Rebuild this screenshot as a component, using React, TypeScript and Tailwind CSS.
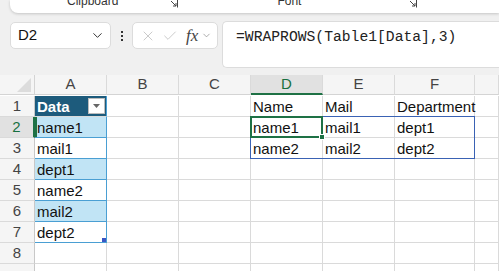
import { ChevronDown, X, Check } from 'lucide-react';

const cols = ['A', 'B', 'C', 'D', 'E', 'F', ''];

type Cell = { text?: string; cls?: string };

// rows 1..9, columns A..G
const rows: Cell[][] = [
  [
    { text: 'Data', cls: 'bg-[#1d5b7c] text-white font-bold border-r-[#4a9fd3]' },
    {},
    {},
    { text: 'Name' },
    { text: 'Mail' },
    { text: 'Department' },
    {},
  ],
  [
    { text: 'name1', cls: 'bg-[#c1e4f5] border-r-[#4a9fd3] border-b-[#4a9fd3]' },
    {},
    {},
    { text: 'name1' },
    { text: 'mail1' },
    { text: 'dept1' },
    {},
  ],
  [
    { text: 'mail1', cls: 'border-r-[#4a9fd3] border-b-[#4a9fd3]' },
    {},
    {},
    { text: 'name2' },
    { text: 'mail2' },
    { text: 'dept2' },
    {},
  ],
  [{ text: 'dept1', cls: 'bg-[#c1e4f5] border-r-[#4a9fd3] border-b-[#4a9fd3]' }, {}, {}, {}, {}, {}, {}],
  [{ text: 'name2', cls: 'border-r-[#4a9fd3] border-b-[#4a9fd3]' }, {}, {}, {}, {}, {}, {}],
  [{ text: 'mail2', cls: 'bg-[#c1e4f5] border-r-[#4a9fd3] border-b-[#4a9fd3]' }, {}, {}, {}, {}, {}, {}],
  [{ text: 'dept2', cls: 'border-r-[#4a9fd3] border-b-[#4a9fd3]' }, {}, {}, {}, {}, {}, {}],
  [{}, {}, {}, {}, {}, {}, {}],
  [{}, {}, {}, {}, {}, {}, {}],
];

function Launcher() {
  return (
    <svg width="9" height="9" viewBox="0 0 9 9" fill="none" stroke="#444" strokeWidth="1">
      <path d="M0.5 0.5h8v8" />
      <path d="M2 2l5 5M4 7h3V4" />
    </svg>
  );
}

export default function App() {
  return (
    <div className="w-[499px] h-[271px] overflow-hidden bg-[#f0f0f0] font-['Liberation_Sans',Arial,sans-serif] text-[#111]">
      {/* ribbon bottom */}
      <div className="ml-[10px] h-[13px] bg-white rounded-bl-[8px] shadow-[0_1px_3px_rgba(0,0,0,0.18)] flex items-end overflow-hidden text-[12px] text-[#333] leading-none">
        <span className="ml-[57px] mb-[6px]">Clipboard</span>
        <span className="ml-[51px] mb-[5px]"><Launcher /></span>
        <span className="ml-[99px] mb-[6px]">Font</span>
        <span className="ml-[107px] mb-[5px]"><Launcher /></span>
      </div>

      {/* formula row */}
      <div className="flex items-start mt-[8px] pl-[10px] h-[47px]">
        <div className="w-[101px] h-[27px] mt-[1px] bg-white border border-[#dcdcdc] rounded-[5px] flex items-center pl-[7px] pr-[5px]">
          <span className="text-[15px] flex-1">D2</span>
          <ChevronDown size={15} strokeWidth={1.6} className="text-[#333]" />
        </div>
        <div className="w-[21px] h-[27px] mt-[1px] flex flex-col items-center justify-center gap-[2px]">
          <span className="w-[2px] h-[2px] bg-[#333]" />
          <span className="w-[2px] h-[2px] bg-[#333]" />
          <span className="w-[2px] h-[2px] bg-[#333]" />
        </div>
        <div className="w-[86px] h-[27px] mt-[1px] bg-white border border-[#dcdcdc] rounded-[5px] flex items-center pl-[7px]">
          <X size={16} strokeWidth={1.2} className="text-[#bdbdbd]" />
          <Check size={16} strokeWidth={1.2} className="text-[#bdbdbd] ml-[6px]" />
          <span className="ml-[8px] font-['Liberation_Serif',serif] italic text-[17px] text-[#444] leading-none">fx</span>
          <ChevronDown size={11} strokeWidth={1.5} className="text-[#888] ml-[3px]" />
        </div>
        <div className="flex-1 ml-[4px] h-[47px] bg-white border border-[#dcdcdc] border-r-0 rounded-l-[5px] pl-[13px] pt-[4px] font-['Liberation_Mono',monospace] text-[14.7px] text-[#222]">
          =WRAPROWS(Table1[Data],3)
        </div>
      </div>

      {/* grid */}
      <div className="grid grid-cols-[35px_72px_72px_72px_72px_72px_80px_1fr] mt-[7px] auto-rows-[21px] bg-white text-[15px]">
        {/* header row */}
        <div className="h-[20px] bg-[#f5f5f5] border-r border-b border-[#d4d4d4] relative">
          <svg width="14" height="14" viewBox="0 0 14 14" className="absolute right-[3px] bottom-[2px]">
            <path d="M14 0V14H0Z" fill="#dcdcdc" />
          </svg>
        </div>
        {cols.map((c, i) => (
          <div
            key={i}
            className={`h-[20px] flex items-center justify-center border-r border-[#dadada] ${
              c === 'D'
                ? 'bg-[#e1e1e1] text-[#17703f] border-b-2 border-b-[#1e7145]'
                : 'bg-[#f5f5f5] text-[#444] border-b border-b-[#d4d4d4]'
            }`}
          >
            {c}
          </div>
        ))}

        {rows.map((row, ri) => {
          const r = ri + 1;
          return [
            <div
              key={`h${r}`}
              className={`flex items-center justify-center border-b border-[#dadada] ${
                r === 2
                  ? 'bg-[#e1e1e1] text-[#17703f] border-r-2 border-r-[#1e7145]'
                  : 'bg-[#f5f5f5] text-[#444] border-r border-r-[#c8c8c8]'
              }`}
            >
              {r < 9 ? r : ''}
            </div>,
            ...row.map((cell, ci) => {
              const isA = ci === 0;
              const isD2 = r === 2 && ci === 3;
              const inSpill = r >= 2 && r <= 3 && ci >= 3 && ci <= 5;
              return (
                <div
                  key={`c${r}-${ci}`}
                  className={`relative flex items-center px-[2px] border-r border-b border-[#dadada] ${cell.cls ?? ''}`}
                >
                  {cell.text && <span className="leading-none pt-[1px]">{cell.text}</span>}
                  {isA && r === 1 && (
                    <span className="absolute right-[1px] top-[2px] w-[17px] h-[16px] bg-white border border-[#bcbcbc] flex items-center justify-center">
                      <svg width="7" height="4" viewBox="0 0 7 4">
                        <path d="M0 0H7L3.5 4Z" fill="#666" />
                      </svg>
                    </span>
                  )}
                  {isA && r === 2 && <span className="absolute left-0 top-0 bottom-0 w-[2px] bg-[#1e7145]" />}
                  {isA && r === 7 && <span className="absolute right-0 bottom-0 w-[4px] h-[4px] bg-[#3a56c5]" />}
                  {inSpill && (
                    <span
                      className={`absolute pointer-events-none border-[#3a62b4] -top-[1px] -bottom-[1px] -left-[1px] -right-[1px] ${
                        r === 2 ? 'border-t' : 'border-b'
                      } ${ci === 3 ? 'border-l' : ''} ${ci === 5 ? 'border-r' : ''}`}
                    />
                  )}
                  {isD2 && (
                    <>
                      <span className="absolute -left-[1px] -top-[1px] -right-[1px] -bottom-[1px] border-2 border-[#1e7145] pointer-events-none z-10" />
                      <span className="absolute -right-[3px] -bottom-[3px] w-[6px] h-[6px] bg-[#1e7145] border border-white z-20" />
                    </>
                  )}
                </div>
              );
            }),
          ];
        })}
      </div>
    </div>
  );
}
